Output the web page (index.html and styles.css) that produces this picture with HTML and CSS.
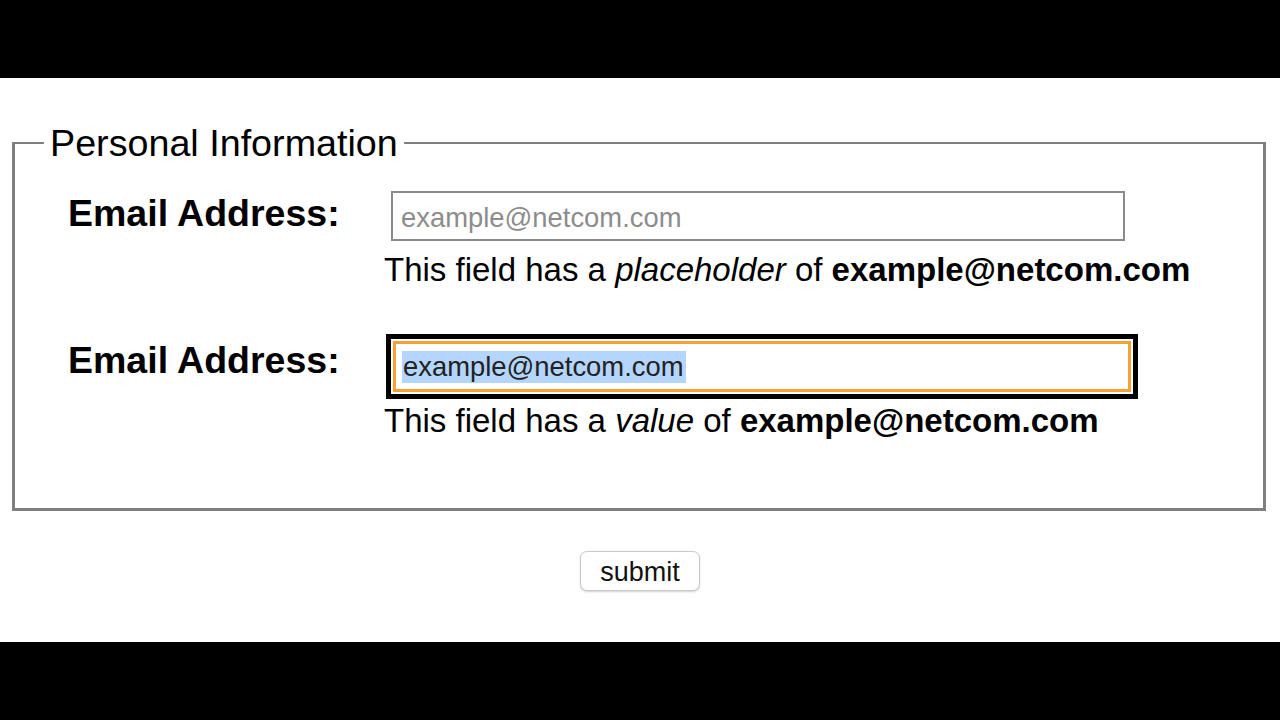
FILE: index.html
```html
<!DOCTYPE html>
<html lang="en">
<head>
  <meta charset="UTF-8" />
  <meta name="viewport" content="width=device-width, initial-scale=1.0" />
  <title>Placeholder vs Value</title>
  <link rel="stylesheet" href="styles.css">
</head>
<body>
  <div class="screen">
    <form class="form" onsubmit="return false">
      <fieldset class="group">
        <legend>Personal Information</legend>

        <div class="row">
          <label class="label" for="email1">Email Address:</label>
          <div class="field-col">
            <input id="email1" class="field" type="email" placeholder="example@netcom.com">
            <p class="hint">This field has a <em>placeholder</em> of <strong>example@netcom.com</strong></p>
          </div>
        </div>

        <div class="row row-second">
          <label class="label">Email Address:</label>
          <div class="field-col">
            <div class="field field-focus"><span class="selected">example@netcom.com</span></div>
            <p class="hint">This field has a <em>value</em> of <strong>example@netcom.com</strong></p>
          </div>
        </div>
      </fieldset>

      <div class="actions">
        <button class="submit-btn" type="submit">submit</button>
      </div>
    </form>
  </div>
</body>
</html>
```

FILE: styles.css
```css
* {
  box-sizing: border-box;
}
body {
  margin: 0;
  background-color: #000;
  font-family: 'Liberation Sans', Arial, sans-serif;
  color: #000;
}
.screen {
  margin-top: 78px;
  height: 564px;
  background-color: #fff;
  overflow: hidden;
}
.form {
  margin: 0;
  padding-top: 46px;
}
.group {
  width: 1254px;
  margin: 0 0 0 12px;
  padding: 0 0 68px 0;
  border-style: solid;
  border-color: #7f7f7f;
  border-width: 2px 3px 3px 3px;
}
.group legend {
  margin-left: 29px;
  padding: 0 6px;
  font-size: 37.7px;
  line-height: 38px;
}
.row {
  display: flex;
  align-items: flex-start;
  padding-left: 53px;
  margin-top: 29px;
}
.row-second {
  margin-top: 52px;
}
.label {
  width: 316px;
  margin-top: 3px;
  font-weight: bold;
  font-size: 37.5px;
  line-height: 38px;
}
.row-second .label {
  margin-top: 0;
}
.field {
  display: block;
  width: 734px;
  height: 50px;
  margin: 0 0 0 7px;
  padding: 4px 8px 0 8px;
  border: 2px solid #8a8a8a;
  border-radius: 0;
  font-family: 'Liberation Sans', Arial, sans-serif;
  font-size: 27.4px;
  color: #222;
  background: #fff;
  outline: none;
}
.field::placeholder {
  color: #8c8c8c;
}
.field-col {
  display: flex;
  flex-direction: column;
  align-items: flex-start;
}
.field-focus {
  display: flex;
  align-items: center;
  width: 738px;
  height: 51px;
  margin-left: 9px;
  padding: 0 0 0 7px;
  border: 3px solid #f7a133;
  box-shadow: 0 0 0 2px #fff, 0 0 0 7px #000;
}
.selected {
  padding: 0 2px 0 1px;
  margin-left: -1px;
  line-height: 32px;
  background-color: #b4d5fe;
}
.hint {
  margin: 10px 0 0 0;
  font-size: 33px;
  line-height: 38px;
  white-space: nowrap;
}
.actions {
  text-align: center;
  margin-top: 40px;
}
.submit-btn {
  width: 120px;
  height: 40px;
  padding: 2px 0 0 0;
  background-color: #fff;
  border: 1px solid #cacaca;
  border-radius: 7px;
  box-shadow: 0 1px 2px rgba(0, 0, 0, 0.18);
  font-family: 'Liberation Sans', Arial, sans-serif;
  font-size: 27px;
  color: #111;
  cursor: pointer;
}
```
